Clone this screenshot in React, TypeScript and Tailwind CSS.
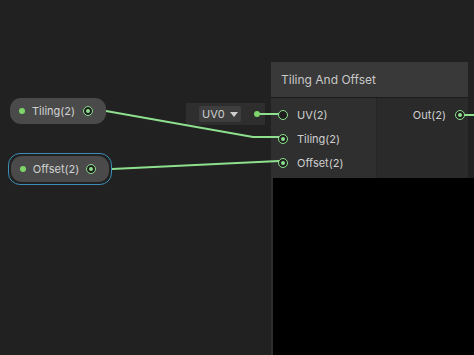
import React from 'react';

const GREEN = '#8ee08e';

function Port({ filled = true }: { filled?: boolean }) {
  return (
    <span className="flex h-[10px] w-[10px] items-center justify-center rounded-full border-[1.5px] border-[#8ee08e] bg-[#1e1e1e]">
      {filled && <span className="h-[4px] w-[4px] rounded-full bg-[#8ee08e]" />}
    </span>
  );
}

function Dot() {
  return <span className="h-[6px] w-[6px] rounded-full bg-[#7ed66a]" />;
}

function PropertyNode({
  label,
  selected = false,
  className,
}: {
  label: string;
  selected?: boolean;
  className: string;
}) {
  return (
    <div
      className={
        'absolute flex items-center rounded-[12px] ' +
        (selected ? 'border-[1.5px] border-[#3b8fb5] p-[2px] ' : '') +
        className
      }
    >
      <div className="flex h-[26px] w-full items-center gap-[7px] rounded-[11px] bg-[#4a4a4a] pl-[9px] pr-[13px]">
        <Dot />
        <span className="flex-1 text-[11px] text-[#d2d2d2]">{label}</span>
        <Port />
      </div>
    </div>
  );
}

export default function App() {
  return (
    <div
      className="relative h-[355px] w-[474px] overflow-hidden bg-[#212121]"
      style={{ fontFamily: 'Inter, "Noto Sans", sans-serif' }}
    >
      {/* main node */}
      <div className="absolute left-[271px] top-[62px] flex w-[197px] flex-col">
        <div className="flex h-[36px] items-center border-b border-[#1c1c1c] bg-[#393939] pl-[10px] text-[12px] text-[#c8c8c8]">
          Tiling And Offset
        </div>
        <div className="flex h-[80px]">
          <div className="flex w-[106px] flex-col gap-[8px] border-r border-[#262626] bg-[#2f2f2f] pl-[7px] pt-[9px]">
            {['UV(2)', 'Tiling(2)', 'Offset(2)'].map((l, i) => (
              <div key={l} className="flex h-[16px] items-center gap-[9px]">
                <Port filled={i !== 0} />
                <span className="text-[11px] text-[#cfcfcf]">{l}</span>
              </div>
            ))}
          </div>
          <div className="flex flex-1 justify-end bg-[#2a2a2a] pr-[3px] pt-[9px]">
            <div className="flex h-[16px] items-center gap-[9px]">
              <span className="text-[11px] text-[#cfcfcf]">Out(2)</span>
              <Port />
            </div>
          </div>
        </div>
      </div>

      {/* preview */}
      <div className="absolute left-[271px] top-[178px] h-[177px] w-[203px] border-l-2 border-[#2e2e2e] bg-black" />

      {/* UV0 inline field */}
      <div className="absolute left-[186px] top-[103px] flex h-[22px] w-[79px] items-center bg-[#2e2e2e] pl-[13px]">
        <div className="flex h-[16px] w-[42px] items-center gap-[5px] rounded-[2px] bg-[#3e3e3e] pl-[3px] text-[11px] text-[#cfcfcf]">
          UV0
          <svg width="8" height="5" viewBox="0 0 8 5">
            <path d="M0 0h8L4 5z" fill="#cfcfcf" />
          </svg>
        </div>
        <span className="ml-[13px] h-[6px] w-[6px] rounded-full bg-[#7ed66a]" />
      </div>

      {/* edges */}
      <svg className="absolute inset-0" width="474" height="355">
        <polyline points="106,111 253,137 279,137" fill="none" stroke={GREEN} strokeWidth="2" />
        <polyline points="112,169 279,161" fill="none" stroke={GREEN} strokeWidth="2" />
        <line x1="260" y1="114" x2="279" y2="114" stroke={GREEN} strokeWidth="2" />
        <line x1="464" y1="115" x2="474" y2="115" stroke={GREEN} strokeWidth="2" />
      </svg>

      <PropertyNode label="Tiling(2)" className="left-[10px] top-[98px] w-[96px]" />
      <PropertyNode label="Offset(2)" selected className="left-[8px] top-[153px] w-[104px]" />
    </div>
  );
}
